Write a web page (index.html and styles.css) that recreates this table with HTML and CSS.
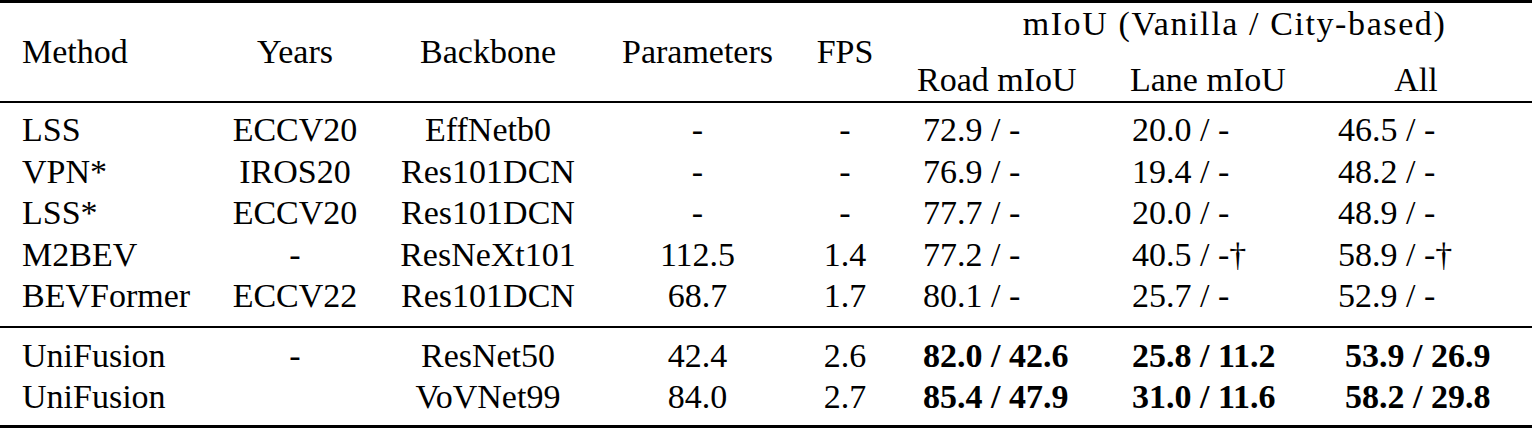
FILE: index.html
```html
<!DOCTYPE html>
<html lang="en">
<head>
    <meta charset="UTF-8">
    <title>BEV segmentation results</title>
    <link rel="stylesheet" href="styles.css">
</head>
<body>
    <table class="results">
        <colgroup>
            <col class="c-method">
            <col class="c-years">
            <col class="c-backbone">
            <col class="c-params">
            <col class="c-fps">
            <col class="c-road">
            <col class="c-lane">
            <col class="c-all">
        </colgroup>
        <thead>
            <tr class="head-top">
                <th rowspan="2" class="method">Method</th>
                <th rowspan="2">Years</th>
                <th rowspan="2">Backbone</th>
                <th rowspan="2">Parameters</th>
                <th rowspan="2">FPS</th>
                <th colspan="3" class="group">mIoU (Vanilla / City-based)</th>
            </tr>
            <tr class="head-sub">
                <th class="road">Road mIoU</th>
                <th class="lane">Lane mIoU</th>
                <th class="all">All</th>
            </tr>
        </thead>
        <tbody class="baselines">
            <tr>
                <td class="method">LSS</td>
                <td>ECCV20</td>
                <td>EffNetb0</td>
                <td>-</td>
                <td>-</td>
                <td class="road">72.9 / -</td>
                <td class="lane">20.0 / -</td>
                <td class="all">46.5 / -</td>
            </tr>
            <tr>
                <td class="method">VPN*</td>
                <td>IROS20</td>
                <td>Res101DCN</td>
                <td>-</td>
                <td>-</td>
                <td class="road">76.9 / -</td>
                <td class="lane">19.4 / -</td>
                <td class="all">48.2 / -</td>
            </tr>
            <tr>
                <td class="method">LSS*</td>
                <td>ECCV20</td>
                <td>Res101DCN</td>
                <td>-</td>
                <td>-</td>
                <td class="road">77.7 / -</td>
                <td class="lane">20.0 / -</td>
                <td class="all">48.9 / -</td>
            </tr>
            <tr>
                <td class="method">M2BEV</td>
                <td>-</td>
                <td>ResNeXt101</td>
                <td>112.5</td>
                <td>1.4</td>
                <td class="road">77.2 / -</td>
                <td class="lane">40.5 / -†</td>
                <td class="all">58.9 / -†</td>
            </tr>
            <tr>
                <td class="method">BEVFormer</td>
                <td>ECCV22</td>
                <td>Res101DCN</td>
                <td>68.7</td>
                <td>1.7</td>
                <td class="road">80.1 / -</td>
                <td class="lane">25.7 / -</td>
                <td class="all">52.9 / -</td>
            </tr>
        </tbody>
        <tbody class="ours">
            <tr>
                <td class="method">UniFusion</td>
                <td>-</td>
                <td>ResNet50</td>
                <td>42.4</td>
                <td>2.6</td>
                <td class="road best">82.0 / 42.6</td>
                <td class="lane best">25.8 / 11.2</td>
                <td class="all best">53.9 / 26.9</td>
            </tr>
            <tr>
                <td class="method">UniFusion</td>
                <td></td>
                <td>VoVNet99</td>
                <td>84.0</td>
                <td>2.7</td>
                <td class="road best">85.4 / 47.9</td>
                <td class="lane best">31.0 / 11.6</td>
                <td class="all best">58.2 / 29.8</td>
            </tr>
        </tbody>
    </table>
</body>
</html>
```

FILE: styles.css
```css
body {
    margin: 0;
    background: #fff;
}
.results {
    width: 1532px;
    table-layout: fixed;
    border-collapse: separate;
    border-spacing: 0;
    border-top: 3px solid #000;
    border-bottom: 3px solid #000;
    font-family: "Liberation Serif", "Times New Roman", serif;
    font-size: 34px;
    line-height: 41.4px;
    color: #000;
}
.c-method { width: 200px; }
.c-years { width: 190px; }
.c-backbone { width: 196px; }
.c-params { width: 223px; }
.c-fps { width: 72px; }
.c-road { width: 229px; }
.c-lane { width: 210px; }
.c-all { width: 212px; }
th, td {
    padding: 0;
    font-weight: normal;
    text-align: center;
    white-space: nowrap;
}
th {
    vertical-align: middle;
}
.head-top th[rowspan],
.head-sub th {
    border-bottom: 2px solid #000;
}
.group {
    padding: 0 0 15px 56px;
    letter-spacing: 1.6px;
}
.method {
    text-align: left;
    padding-left: 22px;
}
th.road {
    text-align: left;
    padding-left: 36px;
}
th.lane {
    text-align: left;
    padding-left: 20px;
}
th.all {
    padding-right: 20px;
}
td.road {
    text-align: left;
    padding-left: 42px;
}
td.lane {
    text-align: left;
    padding-left: 22px;
}
td.all {
    text-align: left;
    padding-left: 18px;
}
td.best {
    font-weight: bold;
}
td.all.best {
    padding-left: 25px;
}
.baselines tr:first-child td {
    padding-top: 6.5px;
}
.baselines tr:last-child td {
    padding-bottom: 9.5px;
    border-bottom: 2px solid #000;
}
.ours tr:first-child td {
    padding-top: 6.8px;
}
.ours tr:last-child td {
    padding-bottom: 7.5px;
}
```
